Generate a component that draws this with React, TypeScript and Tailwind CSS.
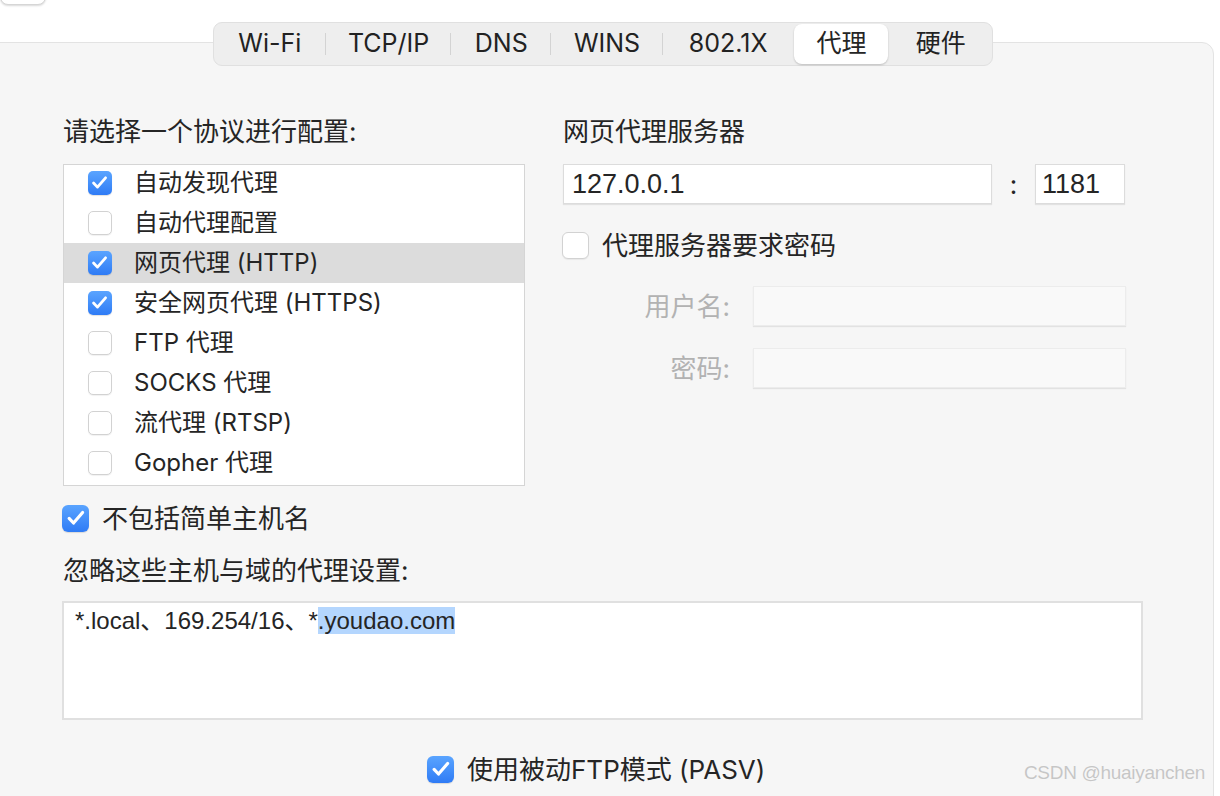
import type { ReactNode } from 'react'

const TABS = [
  { label: 'Wi-Fi', w: 'w-[112px]', sep: true },
  { label: 'TCP/IP', w: 'w-[126px]', sep: true },
  { label: 'DNS', w: 'w-[100px]', sep: true },
  { label: 'WINS', w: 'w-[112px]', sep: true },
  { label: '802.1X', w: 'w-[131px]', sep: false },
  { label: '代理', w: 'w-[96px]', sep: false, active: true },
  { label: '硬件', w: 'w-[103px]', sep: false },
]

const PROTOCOLS = [
  { label: '自动发现代理', checked: true },
  { label: '自动代理配置', checked: false },
  { label: '网页代理 (HTTP)', checked: true, selected: true },
  { label: '安全网页代理 (HTTPS)', checked: true },
  { label: 'FTP 代理', checked: false },
  { label: 'SOCKS 代理', checked: false },
  { label: '流代理 (RTSP)', checked: false },
  { label: 'Gopher 代理', checked: false },
]

const FONT = "font-['Inter','Noto_Sans_CJK_SC',sans-serif]"

function Check({ checked, big }: { checked: boolean; big?: boolean }) {
  const size = big ? 'w-[27px] h-[27px] rounded-[6px]' : 'w-6 h-6 rounded-[5px]'
  if (!checked) {
    return (
      <span
        className={`${size} shrink-0 bg-white border border-[#d2d2d2] shadow-[0_1px_1px_rgba(0,0,0,0.06)]`}
      />
    )
  }
  return (
    <span
      className={`${size} shrink-0 flex items-center justify-center bg-gradient-to-b from-[#5aa4ff] to-[#2f7bf5] shadow-[0_1px_1px_rgba(0,0,0,0.12)]`}
    >
      <svg viewBox="0 0 24 24" className="w-[88%] h-[88%]" fill="none">
        <path
          d="M5.2 12.6l4.4 4.6L18.8 6.6"
          stroke="#fff"
          strokeWidth="3.2"
          strokeLinecap="round"
          strokeLinejoin="round"
        />
      </svg>
    </span>
  )
}

function Field({ className, children }: { className: string; children?: ReactNode }) {
  return (
    <div
      className={`h-10 flex items-center border border-[#dcdcdc] shadow-[0_1px_1px_rgba(0,0,0,0.08)] font-['Liberation_Sans','Noto_Sans_CJK_SC',sans-serif] text-[27px] ${className}`}
    >
      {children}
    </div>
  )
}

export default function App() {
  return (
    <div className={`relative h-[796px] w-[1220px] overflow-hidden bg-white text-[26px] text-[#252525] ${FONT}`}>
      {/* bottom of a toolbar button above */}
      <div className="-mt-[25px] h-[30px] w-[46px] rounded-[8px] border border-[#d6d6d6] bg-white shadow-[0_1px_2px_rgba(0,0,0,0.15)]" />

      <div className="-ml-px mt-[37px] h-[800px] w-[1215px] rounded-tr-[12px] border border-[#e3e3e3] bg-[#f6f6f6]">
        {/* tabs */}
        <div className="-mt-[21px] ml-[213px] flex h-[44px] w-[780px] items-center rounded-[9px] border border-[#e0e0e0] bg-[#eeeeee] text-[25px]">
          {TABS.map((t) => (
            <div key={t.label} className={`relative flex h-full items-center justify-center ${t.w}`}>
              {t.active ? (
                <div className="flex h-[40px] w-[94px] items-center justify-center rounded-[8px] bg-white shadow-[0_1px_2px_rgba(0,0,0,0.2)]">
                  {t.label}
                </div>
              ) : (
                <span className="text-[#222]">{t.label}</span>
              )}
              {t.sep && <span className="absolute right-0 top-[10px] h-[22px] w-px bg-[#d3d3d3]" />}
            </div>
          ))}
        </div>

        <div className="pl-[63px] pt-[50px]">
          <div className="flex gap-[38px]">
            {/* left column */}
            <div className="w-[462px]">
              <div className="h-8 leading-8">请选择一个协议进行配置:</div>
              <div className="mt-4 h-[322px] border border-[#d5d5d5] bg-white pt-[-2px] text-[24px]">
                <div className="-mt-[2px]">
                  {PROTOCOLS.map((p) => (
                    <div
                      key={p.label}
                      className={`flex h-10 items-center gap-[22px] pl-6 ${p.selected ? 'bg-[#dcdcdc]' : ''}`}
                    >
                      <Check checked={p.checked} />
                      <span>{p.label}</span>
                    </div>
                  ))}
                </div>
              </div>
              <div className="-ml-px mt-4 flex h-8 items-center gap-[13px]">
                <Check checked big />
                <span>不包括简单主机名</span>
              </div>
            </div>

            {/* right column */}
            <div className="w-[563px]">
              <div className="h-8 leading-8">网页代理服务器</div>
              <div className="mt-4 flex items-center">
                <Field className="w-[429px] bg-white pl-[8px]">127.0.0.1</Field>
                <span className="w-[43px] text-center">:</span>
                <Field className="w-[90px] bg-white pl-[6px]">1181</Field>
              </div>
              <div className="-ml-px mt-[25px] flex h-8 items-center gap-[13px]">
                <Check checked={false} big />
                <span>代理服务器要求密码</span>
              </div>
              <div className="mt-[25px] flex items-center gap-[23px]">
                <span className="w-[167px] text-right text-[#b2b2b2]">用户名:</span>
                <Field className="w-[373px] bg-[#f9f9f9] border-[#ececec] shadow-[0_1px_1px_rgba(0,0,0,0.04)]" />
              </div>
              <div className="mt-[22px] flex items-center gap-[23px]">
                <span className="w-[167px] text-right text-[#b2b2b2]">密码:</span>
                <Field className="w-[373px] bg-[#f9f9f9] border-[#ececec] shadow-[0_1px_1px_rgba(0,0,0,0.04)]" />
              </div>
            </div>
          </div>

          <div className="mt-[21px] h-8 leading-8">忽略这些主机与域的代理设置:</div>
          <div className="-ml-px mt-[14px] h-[119px] w-[1081px] border-2 border-[#e0e0e0] bg-white pl-[11px] pt-[1px] text-[24px]">
            <div className="h-[34px] font-['Liberation_Sans','Noto_Sans_CJK_SC',sans-serif] leading-[34px]">
              *.local、169.254/16、*<span className="bg-[#b4d6fe]">.youdao.com</span>
            </div>
          </div>

          <div className="ml-[364px] mt-[33px] flex h-8 items-center gap-[13px]">
            <Check checked big />
            <span>使用被动FTP模式 (PASV)</span>
          </div>
        </div>
      </div>

      <div className="absolute bottom-[9px] right-[15px] font-['Liberation_Sans',sans-serif] text-[19px] tracking-[-0.3px] text-[#c6c6c6] [text-shadow:0_0_1px_#fff]">
        CSDN @huaiyanchen
      </div>
    </div>
  )
}
